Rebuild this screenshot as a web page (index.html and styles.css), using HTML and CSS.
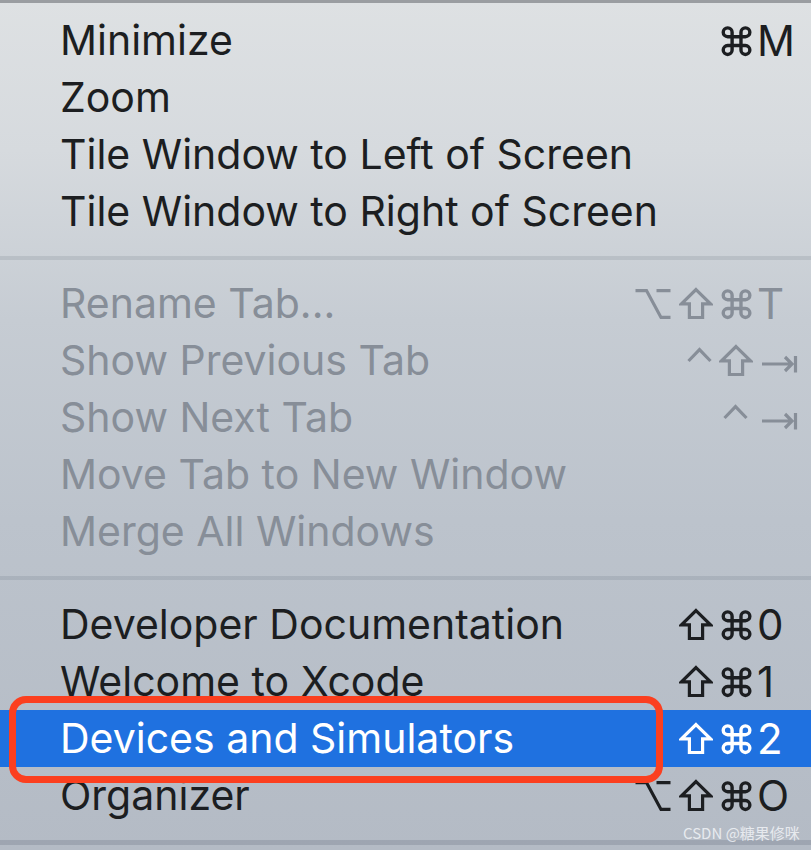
FILE: index.html
```html
<!DOCTYPE html>
<html lang="en">
<head>
<meta charset="utf-8">
<title>Window menu</title>
<link rel="stylesheet" href="styles.css">
</head>
<body>
<svg class="defs" width="0" height="0" aria-hidden="true">
  <defs>
    <symbol id="cmd" viewBox="0 0 33 34">
      <g transform="translate(-1.2,-0.6) scale(1.478)">
        <path d="M15 6v12a3 3 0 1 0 3-3H6a3 3 0 1 0 3 3V6a3 3 0 1 0-3 3h12a3 3 0 1 0-3-3z" stroke-width="2.3"/>
      </g>
    </symbol>
    <symbol id="shift" viewBox="0 0 34 34">
      <path d="M17 2.6 L31.5 16.8 H23.6 V30.5 H10.4 V16.8 H2.5 Z"/>
    </symbol>
    <symbol id="opt" viewBox="0 0 38 34">
      <path d="M1.5 3.6 H12.5 L27 30.4 H36.5 M22.5 3.6 H36.5"/>
    </symbol>
    <symbol id="ctrl" viewBox="0 0 25 34">
      <path d="M1.5 17 L12.5 5.6 L23.5 17"/>
    </symbol>
    <symbol id="tab" viewBox="0 0 41 34">
      <path d="M5 20 H35 M28 13 L35 20 L28 27 M38.5 12 V28.5"/>
    </symbol>
  </defs>
</svg>

<div class="screen">
  <div class="topbar"></div>
  <div class="menu">
    <div class="item">
      <span class="label">Minimize</span>
      <span class="sc"><span class="mods"><svg class="g g-cmd"><use href="#cmd"/></svg></span><span class="key">M</span></span>
    </div>
    <div class="item"><span class="label">Zoom</span></div>
    <div class="item"><span class="label">Tile Window to Left of Screen</span></div>
    <div class="item"><span class="label">Tile Window to Right of Screen</span></div>

    <div class="sep sep-a"></div>

    <div class="item disabled">
      <span class="label">Rename Tab...</span>
      <span class="sc"><span class="mods"><svg class="g g-opt"><use href="#opt"/></svg><svg class="g g-shift"><use href="#shift"/></svg><svg class="g g-cmd"><use href="#cmd"/></svg></span><span class="key">T</span></span>
    </div>
    <div class="item disabled">
      <span class="label">Show Previous Tab</span>
      <span class="sc"><span class="mods"><svg class="g g-ctrl"><use href="#ctrl"/></svg><svg class="g g-shift"><use href="#shift"/></svg></span><span class="key"><svg class="g g-tab"><use href="#tab"/></svg></span></span>
    </div>
    <div class="item disabled">
      <span class="label">Show Next Tab</span>
      <span class="sc"><span class="mods"><svg class="g g-ctrl g-ctrl-solo"><use href="#ctrl"/></svg></span><span class="key"><svg class="g g-tab"><use href="#tab"/></svg></span></span>
    </div>
    <div class="item disabled"><span class="label">Move Tab to New Window</span></div>
    <div class="item disabled"><span class="label">Merge All Windows</span></div>

    <div class="sep sep-b"></div>

    <div class="item">
      <span class="label">Developer Documentation</span>
      <span class="sc"><span class="mods"><svg class="g g-shift"><use href="#shift"/></svg><svg class="g g-cmd"><use href="#cmd"/></svg></span><span class="key">0</span></span>
    </div>
    <div class="item">
      <span class="label">Welcome to Xcode</span>
      <span class="sc"><span class="mods"><svg class="g g-shift"><use href="#shift"/></svg><svg class="g g-cmd"><use href="#cmd"/></svg></span><span class="key">1</span></span>
    </div>
    <div class="item selected">
      <span class="label">Devices and Simulators</span>
      <span class="sc"><span class="mods"><svg class="g g-shift"><use href="#shift"/></svg><svg class="g g-cmd"><use href="#cmd"/></svg></span><span class="key">2</span></span>
    </div>
    <div class="item">
      <span class="label">Organizer</span>
      <span class="sc"><span class="mods"><svg class="g g-opt"><use href="#opt"/></svg><svg class="g g-shift"><use href="#shift"/></svg><svg class="g g-cmd"><use href="#cmd"/></svg></span><span class="key">O</span></span>
    </div>

    <div class="sep sep-c"></div>
  </div>

  <div class="ring" aria-hidden="true"></div>
  <div class="watermark">CSDN @糖果修咪</div>
</div>
</body>
</html>
```

FILE: styles.css
```css
* {
  box-sizing: border-box;
  margin: 0;
  padding: 0;
}

html, body {
  width: 811px;
  height: 850px;
  overflow: hidden;
}

body {
  font-family: Inter, "Noto Sans", sans-serif;
  background: linear-gradient(180deg,
    #dee1e3 0px,
    #d6dade 150px,
    #c6ccd3 320px,
    #bcc3cc 520px,
    #b4bbc5 850px);
}

.defs {
  position: absolute;
  width: 0;
  height: 0;
  overflow: hidden;
}

.screen {
  position: relative;
  height: 850px;
}

.topbar {
  height: 3px;
  background: #9a9da1;
}

.menu {
  padding-top: 9px;
}

.item {
  position: relative;
  height: 57px;
  display: flex;
  align-items: center;
  padding-left: 60px;
  padding-right: 14px;
  font-size: 41px;
  line-height: 57px;
  color: #1c1e21;
  white-space: nowrap;
}

.item.disabled {
  color: #878e98;
}

.item.selected {
  background: #1f71e0;
  color: #ffffff;
}

.sc {
  margin-left: auto;
  display: flex;
  align-items: center;
}

.mods {
  display: flex;
  align-items: center;
  justify-content: flex-end;
  gap: 7px;
}

.key {
  width: 40px;
  margin-left: 4px;
  display: flex;
  align-items: center;
  font-size: 42px;
}

.g {
  display: block;
  height: 34px;
  fill: none;
  stroke: currentColor;
  stroke-width: 3.2;
  overflow: visible;
}

.g-cmd { width: 33px; }
.g-shift { width: 34px; }
.g-opt { width: 38px; }
.g-ctrl { width: 25px; }
.g-ctrl-solo { margin-right: 5px; }
.g-tab { width: 41px; }

.sep {
  display: flex;
  align-items: center;
}

.sep::before {
  content: "";
  display: block;
  width: 100%;
  height: 4px;
  background: rgba(70, 82, 98, 0.14);
}

.sep-a { height: 35px; }
.sep-b { height: 36px; }
.sep-c {
  height: 26px;
  align-items: flex-start;
  padding-top: 16px;
}

.sep-c::before {
  height: 5px;
  background: rgba(70, 82, 98, 0.2);
}

.ring {
  position: absolute;
  left: 9px;
  top: 696px;
  width: 654px;
  height: 87px;
  border: 7px solid #fb3f1f;
  border-radius: 17px;
}

.watermark {
  position: absolute;
  left: 683px;
  top: 823px;
  font-family: "Noto Sans CJK SC", "Noto Sans", sans-serif;
  font-size: 15px;
  line-height: 20px;
  color: rgba(245, 247, 250, 0.8);
  white-space: nowrap;
}
```
